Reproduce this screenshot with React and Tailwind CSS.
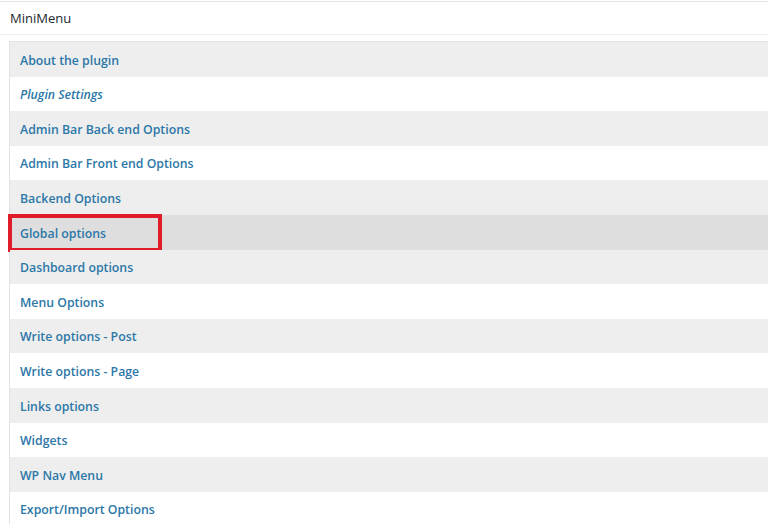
import React from 'react';

const items = [
  'About the plugin',
  'Plugin Settings',
  'Admin Bar Back end Options',
  'Admin Bar Front end Options',
  'Backend Options',
  'Global options',
  'Dashboard options',
  'Menu Options',
  'Write options - Post',
  'Write options - Page',
  'Links options',
  'Widgets',
  'WP Nav Menu',
  'Export/Import Options',
];

export default function App() {
  return (
    <div className="w-[768px] h-[524px] overflow-hidden bg-white font-['Open_Sans',sans-serif]">
      <div className="mt-[1px] border-t border-[#e3e3e3]">
        <div className="h-[33px] flex items-center pl-[10px] pt-[2px] text-[13px] text-[#23282d] border-b border-[#eeeeee]">
          MiniMenu
        </div>
        <div className="pl-[9px] pt-[6px]">
          <div className="border-t border-l border-[#e2e2e2]">
            {items.map((label, i) => {
              const selected = label === 'Global options';
              const bg = selected ? 'bg-[#dedede]' : i % 2 === 0 ? 'bg-[#eeeeee]' : 'bg-white';
              return (
                <div key={label} className={`relative h-[34.6px] flex items-center pl-[10px] pt-[3px] ${bg}`}>
                  <span className={`text-[12.3px] font-semibold text-[#2b77a7] ${label === 'Plugin Settings' ? 'italic' : ''}`}>
                    {label}
                  </span>
                  {selected && (
                    <div className="absolute left-[-2px] top-[-1px] w-[154px] h-[38px] border-[4px] border-solid border-[#e01b2a]" />
                  )}
                </div>
              );
            })}
          </div>
        </div>
      </div>
    </div>
  );
}
